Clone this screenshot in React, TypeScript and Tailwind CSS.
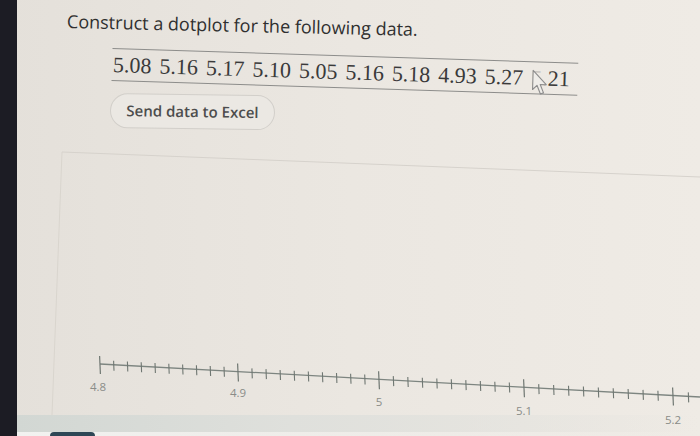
import React from "react";

const values = [4.8, 4.9, 5.0, 5.1, 5.2];
const majorX = [100, 238, 379, 524, 673];

// piecewise x for a value (photo has perspective, spacing grows to the right)
function xFor(v: number) {
  const i = Math.min(Math.floor((v - 4.8) / 0.1 + 1e-9), 3);
  const t = (v - values[i]) / 0.1;
  return majorX[i] + (majorX[i + 1] - majorX[i]) * t;
}
const yFor = (x: number) => 364 + (x - 100) * 0.055;

function Axis() {
  const ticks: { x: number; major: boolean }[] = [];
  for (let k = 0; k <= 41; k++) {
    const v = 4.8 + k * 0.01;
    const x = k <= 40 ? xFor(v) : 673 + 15.5;
    ticks.push({ x, major: k % 10 === 0 });
  }
  const labelDy = [19, 17, 19, 20, 20];
  return (
    <svg viewBox="45 145 655 270" className="relative z-10 w-full h-full overflow-visible" preserveAspectRatio="none">
      {/* panel border */}
      <line x1="62" y1="152" x2="52" y2="415" stroke="#d9d5ce" strokeWidth="1" />
      <line x1="62" y1="152" x2="700" y2="177" stroke="#d6d2cc" strokeWidth="1" />
      {/* axis */}
      <line x1="100" y1={yFor(100)} x2="700" y2={yFor(700)} stroke="#7d8580" strokeWidth="1.3" />
      {ticks.map((t, i) => {
        const y = yFor(t.x);
        return t.major ? (
          <line key={i} x1={t.x - 0.4} y1={y - 8} x2={t.x + 0.4} y2={y + 10} stroke="#6f7772" strokeWidth="1.2" />
        ) : (
          <line key={i} x1={t.x - 0.2} y1={y - 4} x2={t.x + 0.2} y2={y + 6} stroke="#6f7772" strokeWidth="1.1" />
        );
      })}
      {values.map((v, i) => (
        <text
          key={v}
          x={majorX[i] - (i === 0 ? 2 : 0)}
          y={yFor(majorX[i]) + labelDy[i] + 8}
          textAnchor="middle"
          fontSize="11.5"
          fill="#8a8c88"
          fontFamily="'Open Sans', sans-serif"
        >
          {v === 5 ? "5" : v.toFixed(1)}
        </text>
      ))}
    </svg>
  );
}

function Cursor() {
  return (
    <svg width="19" height="27" viewBox="0 0 15 22" className="absolute left-[419px] top-[7px]">
      <path
        d="M1.5 1 L1.5 16.5 L5 13 L8 20 L10.5 19 L7.6 12.3 L12.5 12.3 Z"
        fill="#efede9"
        stroke="#8d8d8d"
        strokeWidth="0.9"
        strokeLinejoin="round"
      />
    </svg>
  );
}

export default function App() {
  return (
    <div className="w-[700px] h-[436px] flex overflow-hidden bg-gradient-to-r from-[#e4e0da] via-[#ebe7e1] to-[#efebe5]">
      <div className="w-[17px] shrink-0 bg-[#1c1c24]" />
      <div className="flex-1 flex flex-col">
        <h1 className="ml-[50px] mt-[9px] h-[24px] leading-[24px] text-[18px] text-[#2f2f2f] font-['Open_Sans',sans-serif] origin-left rotate-[1.3deg] whitespace-nowrap">
          Construct a dotplot for the following data.
        </h1>

        <div className="relative ml-[95px] mt-[15px] w-[466px] h-[33px] border-y border-[#8d8d8b] origin-left rotate-[1.8deg]">
          <p className="leading-[31px] text-[22px] text-[#3a3a3a] font-['Liberation_Serif',serif] pl-px [word-spacing:2.5px] whitespace-nowrap">
            5.08 5.16 5.17 5.10 5.05 5.16 5.18 4.93 5.27 <span className="text-[#c9c6c1]">5.</span>21
          </p>
          <Cursor />
        </div>

        <div className="ml-[93px] mt-[12px]">
          <button className="h-[35px] w-[165px] rounded-full border border-[#d2cfca] bg-[#ebe8e3] text-[15px] font-semibold text-[#4d4d4d] font-['Open_Sans',sans-serif] origin-left rotate-[0.8deg]">
            Send data to Excel
          </button>
        </div>

        <div className="ml-[28px] mt-[17px] flex-1">
          <Axis />
        </div>

        <div className="relative h-[21px]">
          <div className="h-[17px] bg-gradient-to-r from-[#d2d7d3] via-[#dfe0dc] via-40% to-transparent" />
          <div className="h-[4px] bg-gradient-to-r from-[#f2f2f0] to-transparent" />
          <div className="absolute left-[33px] bottom-0 w-[45px] h-[4px] rounded-t-full bg-[#2e4756]" />
        </div>
      </div>
    </div>
  );
}
